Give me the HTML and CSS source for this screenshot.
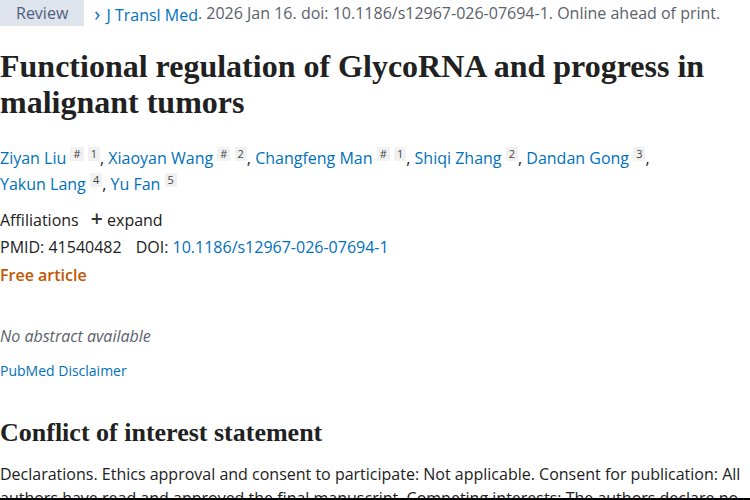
FILE: index.html
```html
<!DOCTYPE html>
<html lang="en">
<head>
  <meta charset="UTF-8">
  <title>Functional regulation of GlycoRNA and progress in malignant tumors</title>
  <link rel="stylesheet" href="styles.css">
</head>
<body>
  <main class="article">
    <div class="article-citation">
      <span class="pub-type">Review</span>
      <a class="journal" href="#"><span class="chevron">&#x203A;</span> J Transl Med</a><span class="cit">. 2026 Jan 16. doi: 10.1186/s12967-026-07694-1. Online ahead of print.</span>
    </div>

    <h1 class="heading-title">Functional regulation of GlycoRNA and progress in malignant tumors</h1>

    <div class="authors">
      <span class="author"><a href="#">Ziyan Liu</a> <sup class="equal">#</sup> <sup class="aff">1</sup>,</span>
      <span class="author"><a href="#">Xiaoyan Wang</a> <sup class="equal">#</sup> <sup class="aff">2</sup>,</span>
      <span class="author"><a href="#">Changfeng Man</a> <sup class="equal">#</sup> <sup class="aff">1</sup>,</span>
      <span class="author"><a href="#">Shiqi Zhang</a> <sup class="aff">2</sup>,</span>
      <span class="author"><a href="#">Dandan Gong</a> <sup class="aff">3</sup>,</span>
      <span class="author"><a href="#">Yakun Lang</a> <sup class="aff">4</sup>,</span>
      <span class="author"><a href="#">Yu Fan</a> <sup class="aff">5</sup></span>
    </div>

    <div class="affiliations">Affiliations <span class="expand"><span class="plus">+</span> expand</span></div>

    <div class="identifiers">
      <span>PMID: 41540482</span>
      <span>DOI: <a href="#">10.1186/s12967-026-07694-1</a></span>
    </div>

    <div class="free">Free article</div>

    <p class="empty-abstract">No abstract available</p>

    <a class="disclaimer" href="#">PubMed Disclaimer</a>

    <h2 class="section-title">Conflict of interest statement</h2>
    <p class="statement">Declarations. Ethics approval and consent to participate: Not applicable. Consent for publication: All authors have read and approved the final manuscript. Competing interests: The authors declare no competing interests.</p>
  </main>
  <div class="edge"></div>
</body>
</html>
```

FILE: styles.css
```css
body {
  margin: 0;
  background-color: #fff;
  color: #212121;
  font-family: 'Open Sans', 'Noto Sans', sans-serif;
  font-size: 16px;
  overflow: hidden;
}

a {
  color: #0071bc;
  text-decoration: none;
}

.article-citation {
  display: flex;
  align-items: center;
  height: 26px;
  color: #5b616b;
  white-space: nowrap;
}

.pub-type {
  display: inline-block;
  background-color: #dfe3ec;
  color: #4d607e;
  padding: 0 16px;
  line-height: 26px;
  margin-right: 10px;
}

.chevron {
  font-size: 20px;
  margin-right: 2px;
}

.heading-title {
  font-family: 'Liberation Serif', serif;
  font-weight: bold;
  font-size: 32px;
  line-height: 36px;
  margin: 22px 0 25px;
  color: #212121;
}

.authors {
  line-height: 26px;
  max-width: 700px;
}

.author {
  white-space: nowrap;
}

.authors sup {
  display: inline-block;
  font-size: 11px;
  line-height: 14px;
  padding: 0 3px;
  background-color: #f1f1f1;
  color: #444;
  vertical-align: 6px;
}

.affiliations {
  margin-top: 10px;
  line-height: 26px;
}

.expand {
  margin-left: 8px;
}

.plus {
  font-size: 21px;
  font-weight: 600;
  line-height: 1;
  color: #333;
}

.identifiers {
  line-height: 28px;
  display: flex;
  gap: 14px;
}

.free {
  color: #c05600;
  font-weight: 600;
  line-height: 28px;
}

.empty-abstract {
  font-style: italic;
  color: #5b616b;
  margin: 36px 0 14px;
}

.disclaimer {
  display: block;
  font-size: 14px;
}

.section-title {
  font-family: 'Liberation Serif', serif;
  font-weight: bold;
  font-size: 26px;
  margin: 38px 0 14px;
}

.statement {
  margin: 0;
  line-height: 24px;
}

.edge {
  position: fixed;
  left: 0;
  right: 0;
  bottom: 0;
  height: 2px;
  background-color: #000;
}
```
